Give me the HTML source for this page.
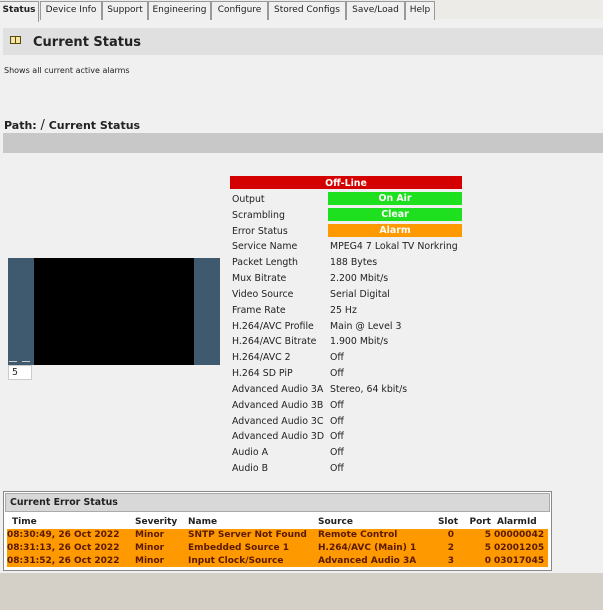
<!DOCTYPE html><html><head><style>
*{margin:0;padding:0;box-sizing:border-box}
body{width:603px;height:610px;background:#d4d0c8;position:relative;overflow:hidden;font-family:"DejaVu Sans","Liberation Sans",sans-serif;font-size:9.4px;color:#222}
.a{position:absolute;white-space:nowrap}
.main{position:absolute;left:0;top:19px;width:603px;height:554px;background:#f0f0f0}
.tab{position:absolute;top:1px;height:19px;background:#f0f0f0;border:1px solid #999;border-bottom:none;font-size:9px;line-height:17px;text-align:center;color:#222}
.lab{position:absolute;left:232px;margin-top:1px}
.val{position:absolute;left:330px;margin-top:1px}
.bar{position:absolute;left:328px;width:134px;height:13px;color:#fff;font-weight:bold;text-align:center;line-height:13px}
table{border-collapse:collapse;table-layout:fixed}
td{padding:0;white-space:nowrap;overflow:hidden}
</style></head><body>
<div class="a" style="left:0;top:0;width:603px;height:20px;background:#ecebe8;border-bottom:1px solid #999"></div>
<div class="main"></div>
<div class="tab" style="left:0;width:39px;font-weight:bold;height:21px;border-left:none">Status</div>
<div class="tab" style="left:40px;width:62px">Device Info</div>
<div class="tab" style="left:102px;width:46px">Support</div>
<div class="tab" style="left:148px;width:63px">Engineering</div>
<div class="tab" style="left:211px;width:57px">Configure</div>
<div class="tab" style="left:268px;width:78px">Stored Configs</div>
<div class="tab" style="left:346px;width:59px">Save/Load</div>
<div class="tab" style="left:405px;width:30px">Help</div>
<div class="a" style="left:3px;top:28px;width:600px;height:27px;background:#e0e0e0"></div>
<div class="a" style="left:10px;top:36px;width:11px;height:8px;background:#f2e6a0;border:1px solid #5a4a10"></div>
<div class="a" style="left:15px;top:36px;width:1px;height:8px;background:#5a4a10"></div>
<div class="a" style="left:33px;top:35px;font-size:13px;font-weight:bold;color:#222">Current Status</div>
<div class="a" style="left:4px;top:66px;font-size:8px">Shows all current active alarms</div>
<div class="a" style="left:4px;top:118px;font-size:11px;font-weight:bold">Path: <span style="font-weight:normal;font-size:13px">/</span> Current Status</div>
<div class="a" style="left:3px;top:133px;width:600px;height:20px;background:#c8c8c8"></div>

<div class="a" style="left:230px;top:176px;width:232px;height:13px;background:#d40000;color:#fff;font-weight:bold;text-align:center;line-height:15px">Off-Line</div>
<div class="bar" style="top:192px;background:#1ee01e">On Air</div>
<div class="bar" style="top:208px;background:#1ee01e">Clear</div>
<div class="bar" style="top:224px;background:#ff9900">Alarm</div>
<div class="lab" style="top:193px">Output</div>
<div class="lab" style="top:209px">Scrambling</div>
<div class="lab" style="top:225px">Error Status</div>
<div class="lab" style="top:240px">Service Name</div><div class="val" style="top:240px">MPEG4 7 Lokal TV Norkring</div>
<div class="lab" style="top:256px">Packet Length</div><div class="val" style="top:256px">188 Bytes</div>
<div class="lab" style="top:272px">Mux Bitrate</div><div class="val" style="top:272px">2.200 Mbit/s</div>
<div class="lab" style="top:288px">Video Source</div><div class="val" style="top:288px">Serial Digital</div>
<div class="lab" style="top:304px">Frame Rate</div><div class="val" style="top:304px">25 Hz</div>
<div class="lab" style="top:320px">H.264/AVC Profile</div><div class="val" style="top:320px">Main @ Level 3</div>
<div class="lab" style="top:335px">H.264/AVC Bitrate</div><div class="val" style="top:335px">1.900 Mbit/s</div>
<div class="lab" style="top:351px">H.264/AVC 2</div><div class="val" style="top:351px">Off</div>
<div class="lab" style="top:367px">H.264 SD PiP</div><div class="val" style="top:367px">Off</div>
<div class="lab" style="top:383px">Advanced Audio 3A</div><div class="val" style="top:383px">Stereo, 64 kbit/s</div>
<div class="lab" style="top:399px">Advanced Audio 3B</div><div class="val" style="top:399px">Off</div>
<div class="lab" style="top:415px">Advanced Audio 3C</div><div class="val" style="top:415px">Off</div>
<div class="lab" style="top:430px">Advanced Audio 3D</div><div class="val" style="top:430px">Off</div>
<div class="lab" style="top:446px">Audio A</div><div class="val" style="top:446px">Off</div>
<div class="lab" style="top:462px">Audio B</div><div class="val" style="top:462px">Off</div>

<div class="a" style="left:8px;top:258px;width:212px;height:107px;background:#3f5a6e"></div>
<div class="a" style="left:34px;top:258px;width:160px;height:107px;background:#000"></div>
<div class="a" style="left:9px;top:361px;width:8px;height:1px;background:#ccc"></div>
<div class="a" style="left:22px;top:361px;width:8px;height:1px;background:#ccc"></div>
<div class="a" style="left:8px;top:365px;width:24px;height:15px;background:#fff;border:1px solid #ccc;padding-left:3px;line-height:13px">5</div>

<div class="a" style="left:3px;top:491px;width:549px;height:80px;background:#fff;border:1px solid #888"></div>
<div class="a" style="left:5px;top:493px;width:545px;height:19px;background:#d8d8d8;border:1px solid #aaa;font-weight:bold;padding-left:4px;line-height:18px">Current Error Status</div>
<div class="a" style="left:7px;top:514px;width:541px">
<table style="width:541px;font-size:9px">
<colgroup><col style="width:128px"><col style="width:53px"><col style="width:130px"><col style="width:113px"><col style="width:27px"><col style="width:33px"><col style="width:57px"></colgroup>
<tr style="font-weight:bold;color:#222;height:15px"><td style="padding-left:5px">Time</td><td>Severity</td><td>Name</td><td>Source</td><td style="text-align:right">Slot</td><td style="text-align:right">Port</td><td style="padding-left:6px">AlarmId</td></tr>
<tr style="background:#ff9900;color:#5a1a00;font-weight:bold;height:12.7px"><td>08:30:49, 26 Oct 2022</td><td>Minor</td><td>SNTP Server Not Found</td><td>Remote Control</td><td style="text-align:right;padding-right:4px">0</td><td style="text-align:right">5</td><td style="padding-left:3px">00000042</td></tr>
<tr style="background:#ff9900;color:#5a1a00;font-weight:bold;height:12.7px"><td>08:31:13, 26 Oct 2022</td><td>Minor</td><td>Embedded Source 1</td><td>H.264/AVC (Main) 1</td><td style="text-align:right;padding-right:4px">2</td><td style="text-align:right">5</td><td style="padding-left:3px">02001205</td></tr>
<tr style="background:#ff9900;color:#5a1a00;font-weight:bold;height:12.7px"><td>08:31:52, 26 Oct 2022</td><td>Minor</td><td>Input Clock/Source</td><td>Advanced Audio 3A</td><td style="text-align:right;padding-right:4px">3</td><td style="text-align:right">0</td><td style="padding-left:3px">03017045</td></tr>
</table></div>
</body></html>
